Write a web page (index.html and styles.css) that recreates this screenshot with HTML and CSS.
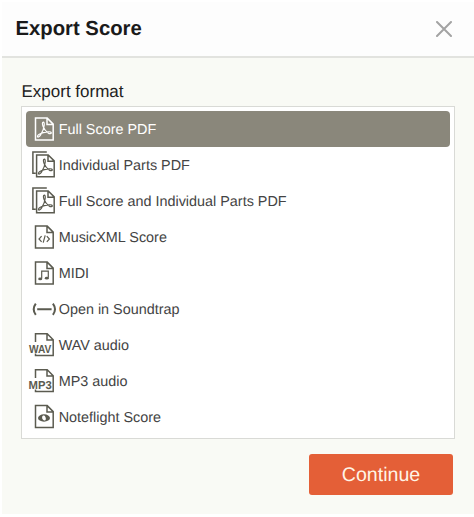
FILE: index.html
```html
<!DOCTYPE html>
<html lang="en">
<head>
  <meta charset="UTF-8">
  <meta name="viewport" content="width=device-width, initial-scale=1.0">
  <title>Export Score</title>
  <link rel="stylesheet" href="styles.css">
</head>
<body>
  <!-- Shapes shared by the format icons -->
  <svg class="defs" width="0" height="0">
    <symbol id="page" viewBox="0 0 32 36">
      <path d="M9.5 7.1H21.2L27.2 13.1V28.9H9.5ZM21 7.3V13.4H27"/>
    </symbol>
    <symbol id="acrobat" viewBox="0 0 32 36">
      <path class="thin" d="M17.2 11.2C15.9 11.4 16.4 13.7 17.2 15.8C18 18 19.8 20.2 22 21.9C23.8 23.1 25.5 22.7 25.3 21.6C25 20.3 20.8 20.7 17.4 21.7C14.6 22.5 11.6 24 11.5 25.4C11.5 26.6 13.2 26.1 14.5 24.1C16.5 21 17.9 17.2 18.2 14.5C18.4 12.4 18.1 11.1 17.2 11.2Z"/>
    </symbol>
    <symbol id="parts" viewBox="0 0 32 36">
      <path d="M9.8 26.3H6.9V5H20.8"/>
      <path d="M10.6 7.9H22.2L28.2 13.9V29.8H10.6ZM22 8.1V14.2H28"/>
      <use href="#acrobat" x="1" y="1" width="32" height="36"/>
    </symbol>
  </svg>

  <div class="dialog">
    <div class="dialog-header">
      <h1>Export Score</h1>
      <svg class="close" viewBox="0 0 16 16"><path d="M1 1L15 15M15 1L1 15"/></svg>
    </div>
    <div class="dialog-body">
      <div class="label">Export format</div>
      <ul class="formats">
        <li class="format selected">
          <svg class="icon" viewBox="0 0 32 36"><use href="#page"/><use href="#acrobat"/></svg>
          <span>Full Score PDF</span>
        </li>
        <li class="format">
          <svg class="icon" viewBox="0 0 32 36"><use href="#parts"/></svg>
          <span>Individual Parts PDF</span>
        </li>
        <li class="format">
          <svg class="icon" viewBox="0 0 32 36"><use href="#parts"/></svg>
          <span>Full Score and Individual Parts PDF</span>
        </li>
        <li class="format">
          <svg class="icon" viewBox="0 0 32 36"><use href="#page"/><path class="thin" d="M15.6 17.2L13 20L15.6 22.8M20.8 17.2L23.4 20L20.8 22.8M19.2 16.4L17.2 23.6"/></svg>
          <span>MusicXML Score</span>
        </li>
        <li class="format">
          <svg class="icon" viewBox="0 0 32 36"><use href="#page"/><path class="thin" d="M15.7 23.6V16.2H22.3V22.8"/><ellipse class="fill" cx="14.2" cy="23.9" rx="2" ry="1.4"/><ellipse class="fill" cx="20.8" cy="23.2" rx="2" ry="1.4"/></svg>
          <span>MIDI</span>
        </li>
        <li class="format">
          <svg class="icon" viewBox="0 0 32 36"><path class="bold" d="M9.8 12.6Q5.6 18.2 9.8 23.8M26.9 12.6Q31.1 18.2 26.9 23.8M11.2 18.2H25.6"/></svg>
          <span>Open in Soundtrap</span>
        </li>
        <li class="format">
          <svg class="icon" viewBox="0 0 32 36"><path d="M9.5 15V6.8H21.2L27.2 12.8V28.6H9.5V26.5M21 7V13.1H27"/><text x="2.9" y="25.6" textLength="22.4" lengthAdjust="spacingAndGlyphs">WAV</text></svg>
          <span>WAV audio</span>
        </li>
        <li class="format">
          <svg class="icon" viewBox="0 0 32 36"><path d="M9.5 15V6.8H21.2L27.2 12.8V28.6H9.5V26.5M21 7V13.1H27"/><text x="2.6" y="25.6" textLength="23.2" lengthAdjust="spacingAndGlyphs">MP3</text></svg>
          <span>MP3 audio</span>
        </li>
        <li class="format">
          <svg class="icon" viewBox="0 0 32 36"><use href="#page" y="-0.5"/><path class="fill" fill-rule="evenodd" d="M12 19A6 3.7 0 0 1 24 19A6 3.7 0 0 1 12 19ZM16.1 18.2C15.9 20 17.7 21.9 19.1 21.4C20.1 20.9 20 19.3 19.4 18C18.5 16 16.3 16 16.1 18.2Z"/></svg>
          <span>Noteflight Score</span>
        </li>
      </ul>
      <div class="actions">
        <button class="continue">Continue</button>
      </div>
    </div>
  </div>
</body>
</html>
```

FILE: styles.css
```css
body {
  margin: 0;
  background-color: #fff;
  font-family: "Liberation Sans", Arial, sans-serif;
  text-rendering: geometricPrecision;
  overflow: hidden;
}

.defs {
  display: block;
}

.dialog {
  box-sizing: border-box;
  height: 512px;
  margin: 2px 0 0 2px;
  background-color: #f9faf5;
}

.dialog-header {
  box-sizing: border-box;
  display: flex;
  justify-content: space-between;
  align-items: center;
  height: 56px;
  padding: 0 22px 0 13.5px;
  background-color: #fdfdfd;
  border-bottom: 2px solid #e2e3df;
}

h1 {
  margin: 0;
  padding-top: 1px;
  font-size: 20.3px;
  color: #1a1a1a;
}

.close {
  width: 16px;
  height: 16px;
  fill: none;
  stroke: #a3a3a3;
  stroke-width: 2;
  stroke-linecap: round;
}

.dialog-body {
  padding: 22px 19px 0 19px;
}

.label {
  height: 26px;
  padding-left: 0.5px;
  line-height: 24px;
  font-size: 17px;
  color: #222;
}

.formats {
  box-sizing: border-box;
  width: 434px;
  height: 333px;
  margin: 0;
  padding: 4px;
  list-style: none;
  background-color: #fff;
  border: 1px solid #d9dad6;
}

.format {
  display: flex;
  align-items: center;
  height: 36px;
  border-radius: 4px;
  font-size: 14.4px;
  color: #444;
}

.format span {
  padding: 1px 0 0 0.7px;
}

.format.selected {
  background-color: #8a877b;
  color: #fff;
}

.icon {
  width: 32px;
  height: 36px;
  fill: none;
  stroke: #5b5b50;
  stroke-width: 1.5;
}

.selected .icon {
  stroke: #fff;
}

.thin {
  stroke-width: 1.2;
}

.icon .bold {
  stroke-width: 2;
}

.icon .fill {
  fill: #5b5b50;
  stroke: none;
}

.icon text {
  fill: #5b5b50;
  stroke: none;
  font-size: 11.5px;
  font-weight: bold;
}

.actions {
  display: flex;
  justify-content: flex-end;
  padding: 15px 2px 0 0;
}

.continue {
  width: 144px;
  height: 41px;
  padding: 1px 0 0;
  background-color: #e45f37;
  color: #fff4e6;
  border: none;
  border-radius: 3px;
  font-family: inherit;
  font-size: 19.6px;
  text-rendering: inherit;
}
```
